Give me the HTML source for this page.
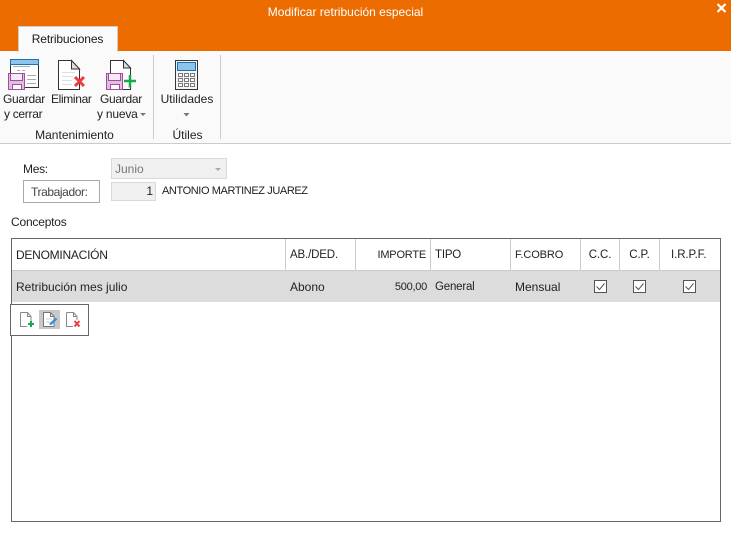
<!DOCTYPE html>
<html>
<head>
<meta charset="utf-8">
<style>
html,body{margin:0;padding:0;background:#fff}
#p{position:relative;width:731px;height:544px;overflow:hidden;background:#fff;font-family:"Liberation Sans",sans-serif;font-size:12px;color:#222}
.a{position:absolute}
.t{position:absolute;white-space:nowrap;line-height:16px}
.c{text-align:center}
svg{position:absolute;overflow:visible}
</style>
</head>
<body>
<div id="p">
<div class="a" style="left:0;top:0;width:731px;height:51px;background:#ed6c00"></div>
<div class="t c" style="left:0;top:4px;width:691px;color:#fff;">Modificar retribución especial</div>
<svg style="left:715px;top:0" width="14" height="16"><path d="M2.500 4L10.500 12M10.500 4L2.500 12" stroke="#fff" stroke-width="2.200"/></svg>

<div class="a" style="left:0;top:51px;width:731px;height:92px;background:#fafafa;border-bottom:1px solid #ccc"></div>
<div class="a" style="left:18px;top:26px;width:98px;height:25px;background:#fafafa;border:1px solid #ccc;border-bottom:none"></div>
<div class="t c" style="left:18px;top:31px;width:99px;color:#1a1a1a;letter-spacing:-.15px">Retribuciones</div>
<div class="a" style="left:153px;top:55px;width:1px;height:84px;background:#ccc"></div>
<div class="a" style="left:220px;top:55px;width:1px;height:84px;background:#ccc"></div>

<!-- Ribbon icons -->
<svg style="left:0;top:0" width="731" height="100">
<!-- sheet -->
<rect x="10.500" y="59.500" width="28" height="28" fill="#fff" stroke="#333"/>
<rect x="10.500" y="59.500" width="28" height="5" fill="#8cc4ee" stroke="#1c6fb5"/>
<path d="M13 66.500h17M17 70.500h3M22 70.500h3M27 75.500h9M27 79.500h9M27 83.500h9" stroke="#aaa"/>
<!-- floppy 1 -->
<rect x="8.500" y="73.500" width="16" height="16" fill="#e0bfdc" stroke="#a24d9e"/>
<rect x="10.500" y="73.500" width="12" height="7" fill="#f6e8f4" stroke="#a24d9e"/>
<rect x="12.500" y="84.500" width="9" height="5" fill="#fff" stroke="#a24d9e"/>
<!-- delete doc -->
<path d="M58.500 60.500H71.500L79.500 69V89.500H58.500Z" fill="#fff" stroke="#333"/>
<path d="M71.500 60.500V69H79.500Z" fill="#ddd" stroke="#333"/>
<path d="M62 72.500h13M62 76.500h11M62 80.500h10M62 84.500h10" stroke="#ddd"/>
<path d="M75 77L84 86M84 77L75 86" stroke="#ef3b40" stroke-width="3"/>
<!-- new doc -->
<path d="M110.500 60.500H123.500L130.500 68V89.500H110.500Z" fill="#fff" stroke="#333"/>
<path d="M123.500 60.500V68H130.500Z" fill="#ddd" stroke="#333"/>
<rect x="106.500" y="73.500" width="16" height="16" fill="#e0bfdc" stroke="#a24d9e"/>
<rect x="108.500" y="73.500" width="12" height="7" fill="#f6e8f4" stroke="#a24d9e"/>
<rect x="110.500" y="84.500" width="9" height="5" fill="#fff" stroke="#a24d9e"/>
<rect x="123" y="76" width="13" height="11" fill="#fafafa"/>
<path d="M130 75V87.500M124 81H136" stroke="#16a950" stroke-width="2.500"/>
<!-- calculator -->
<rect x="175.500" y="60.500" width="22" height="29" fill="#f4f4f4" stroke="#333"/>
<rect x="177.500" y="62.500" width="18" height="8" fill="#8cc4ee" stroke="#1c6fb5"/>
<path d="M178.500 73.500h4v3h-4zM184.500 73.500h4v3h-4zM190.500 73.500h4v3h-4zM178.500 78.500h4v3h-4zM184.500 78.500h4v3h-4zM190.500 78.500h4v3h-4zM178.500 83.500h4v3h-4zM184.500 83.500h4v3h-4zM190.500 83.500h4v3h-4z" fill="#fff" stroke="#777"/>
</svg>

<div class="t" style="left:3px;top:91px;letter-spacing:-.3px">Guardar</div>
<div class="t" style="left:4px;top:106px;letter-spacing:-.3px">y cerrar</div>
<div class="t" style="left:51px;top:91px;letter-spacing:-.35px">Eliminar</div>
<div class="t" style="left:100px;top:91px;letter-spacing:-.3px">Guardar</div>
<div class="t" style="left:97px;top:106px;letter-spacing:-.2px">y nueva</div>
<svg style="left:140px;top:113px" width="8" height="5"><path d="M0 0H6L3 3Z" fill="#777"/></svg>
<div class="t c" style="left:155px;top:91px;width:64px">Utilidades</div>
<svg style="left:183px;top:113px" width="8" height="5"><path d="M0.500 0H6.500L3.500 3.500Z" fill="#777"/></svg>

<div class="t c" style="left:0;top:127px;width:149px">Mantenimiento</div>
<div class="t c" style="left:155px;top:127px;width:65px">Útiles</div>

<!-- Form -->
<div class="t" style="left:23px;top:161px;letter-spacing:-.3px">Mes:</div>
<div class="a" style="left:111px;top:158px;width:114px;height:19px;background:#f0f0f0;border:1px solid #d9d9d9"></div>
<div class="t" style="left:115px;top:161px;color:#777">Junio</div>
<svg style="left:215px;top:168px" width="7" height="4"><path d="M0 0H6L3 3Z" fill="#aaa"/></svg>
<div class="a" style="left:23px;top:180px;width:75px;height:21px;border:1px solid #aaa;background:#fff"></div>
<div class="t" style="left:31px;top:184px;color:#444;letter-spacing:-.4px">Trabajador:</div>
<div class="a" style="left:111px;top:182px;width:43px;height:17px;background:#f0f0f0;border:1px solid #d9d9d9"></div>
<div class="t" style="left:111px;top:183px;width:42px;text-align:right">1</div>
<div class="t" style="left:162px;top:183px;font-size:11px;letter-spacing:-.4px">ANTONIO MARTINEZ JUAREZ</div>
<div class="t" style="left:11px;top:214px;letter-spacing:-.2px">Conceptos</div>

<!-- Grid -->
<div class="a" style="left:11px;top:238px;width:708px;height:282px;border:1px solid #666;background:#fff"></div>
<div class="a" style="left:12px;top:270px;width:708px;height:1px;background:#ccc"></div>
<div class="a" style="left:12px;top:271px;width:708px;height:31px;background:#dcdcdc"></div>
<div class="a" style="left:285px;top:239px;width:1px;height:31px;background:#ccc"></div>
<div class="a" style="left:355px;top:239px;width:1px;height:31px;background:#ccc"></div>
<div class="a" style="left:430px;top:239px;width:1px;height:31px;background:#ccc"></div>
<div class="a" style="left:510px;top:239px;width:1px;height:31px;background:#ccc"></div>
<div class="a" style="left:580px;top:239px;width:1px;height:31px;background:#ccc"></div>
<div class="a" style="left:619px;top:239px;width:1px;height:31px;background:#ccc"></div>
<div class="a" style="left:659px;top:239px;width:1px;height:31px;background:#ccc"></div>

<div class="t" style="left:16px;top:247px;letter-spacing:-.25px">DENOMINACIÓN</div>
<div class="t" style="left:290px;top:247px;font-size:11.500px;letter-spacing:-.15px">AB./DED.</div>
<div class="t" style="left:355px;top:247px;width:71px;text-align:right;font-size:11px;letter-spacing:-.2px">IMPORTE</div>
<div class="t" style="left:435px;top:247px;font-size:11.500px;letter-spacing:-.2px">TIPO</div>
<div class="t" style="left:515px;top:247px;font-size:11px;letter-spacing:-.1px">F.COBRO</div>
<div class="t c" style="left:581px;top:247px;width:38px;font-size:11.500px;letter-spacing:-.1px">C.C.</div>
<div class="t c" style="left:620px;top:247px;width:39px;font-size:11.500px;letter-spacing:-.1px">C.P.</div>
<div class="t" style="left:671px;top:247px;font-size:11.500px;letter-spacing:-.1px">I.R.P.F.</div>

<div class="t" style="left:16px;top:279px">Retribución mes julio</div>
<div class="t" style="left:290px;top:279px">Abono</div>
<div class="t" style="left:355px;top:279px;width:72px;text-align:right;font-size:11px;letter-spacing:-.25px">500,00</div>
<div class="t" style="left:435px;top:279px;font-size:11.500px;letter-spacing:-.2px">General</div>
<div class="t" style="left:515px;top:279px">Mensual</div>
<svg style="left:594px;top:280px" width="13" height="13"><rect x="0.500" y="0.500" width="12" height="12" fill="#fff" stroke="#555"/><path d="M2.500 6.500L5.500 9.500L10.500 3.500" fill="none" stroke="#555"/></svg>
<svg style="left:633px;top:280px" width="13" height="13"><rect x="0.500" y="0.500" width="12" height="12" fill="#fff" stroke="#555"/><path d="M2.500 6.500L5.500 9.500L10.500 3.500" fill="none" stroke="#555"/></svg>
<svg style="left:683px;top:280px" width="13" height="13"><rect x="0.500" y="0.500" width="12" height="12" fill="#fff" stroke="#555"/><path d="M2.500 6.500L5.500 9.500L10.500 3.500" fill="none" stroke="#555"/></svg>

<!-- Mini toolbar -->
<div class="a" style="left:10px;top:304px;width:77px;height:30px;border:1px solid #666;background:#fff"></div>
<div class="a" style="left:39px;top:310px;width:21px;height:19px;background:#c8c8c8"></div>
<svg style="left:20px;top:312px" width="15" height="16"><path d="M.5 .5H7.500L11 4.500V9M.5 .5V14.500H7" fill="none" stroke="#888"/><path d="M7.500 .5V4.500H11" fill="none" stroke="#888"/><path d="M11 9V15M8 12H14" stroke="#16a950" stroke-width="2"/></svg>
<svg style="left:43px;top:312px" width="15" height="16"><path d="M.5 .5H7.500L11 4.500V14.500H.5Z" fill="#fff" stroke="#777"/><path d="M7.500 .5V4.500H11" fill="none" stroke="#777"/><path d="M3 7h6M3 10h4" stroke="#ccc"/><path d="M7 12.500L13.500 6.500" stroke="#3a90d8" stroke-width="2.500"/></svg>
<svg style="left:66px;top:312px" width="15" height="16"><path d="M.5 .5H7.500L11 4.500V8M.5 .5V14.500H7" fill="none" stroke="#888"/><path d="M7.500 .5V4.500H11" fill="none" stroke="#888"/><path d="M8.500 9L13.500 14.500M13.500 9L8.500 14.500" stroke="#ef3b40" stroke-width="2"/></svg>
</div>
</body>
</html>
